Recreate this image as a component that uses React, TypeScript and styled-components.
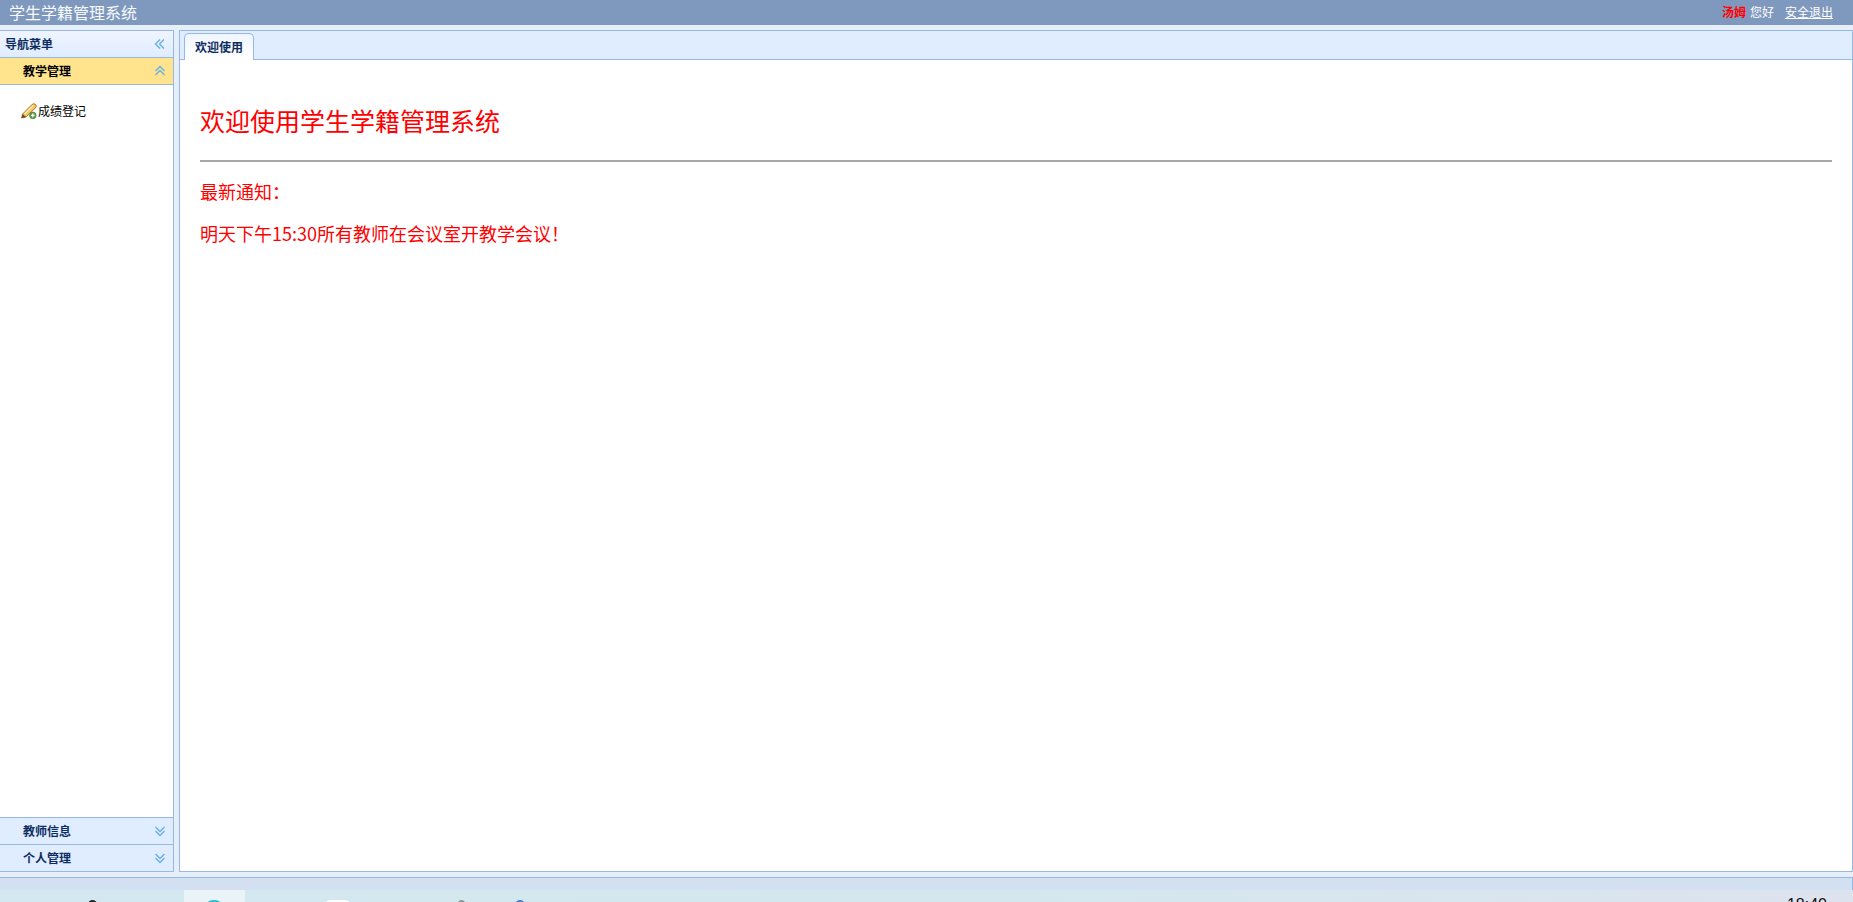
import React from 'react';
import styled, { createGlobalStyle } from 'styled-components';

const FONT = '"Noto Sans CJK SC", "Liberation Sans", sans-serif';

const ChevronIcon: React.FC<{ dir: 'up' | 'down' | 'left' }> = ({ dir }) => {
  const d =
    dir === 'left'
      ? ['M7 1.5 L2.5 6 L7 10.5', 'M11 1.5 L6.5 6 L11 10.5']
      : dir === 'up'
      ? ['M1.5 6 L6 1.5 L10.5 6', 'M1.5 10 L6 5.5 L10.5 10']
      : ['M1.5 2 L6 6.5 L10.5 2', 'M1.5 6 L6 10.5 L10.5 6'];
  return (
    <svg width="12" height="12" viewBox="0 0 12 12" fill="none" stroke="#63aeea" strokeWidth="1.3">
      <path d={d[0]} />
      <path d={d[1]} />
    </svg>
  );
};

const PencilIcon: React.FC = () => (
  <svg width="16" height="16" viewBox="0 0 16 16">
    <path d="M0.6 15 L1.6 11 L11.4 1.2 Q13 0.2 14.6 1.4 Q15.8 3 14.8 4.6 L5 14 Z" fill="#f3c75f" stroke="#a06c26" strokeWidth="0.9" />
    <path d="M0.6 15 L1.6 11 L5 14 Z" fill="#6b4a20" />
    <path d="M3.6 11 L12.4 2.4" stroke="#fff2c0" strokeWidth="1.1" />
    <circle cx="11.8" cy="12.4" r="3.3" fill="#5f9e45" stroke="#3d7a2c" strokeWidth="0.6" />
    <path d="M10 12.4 H13.6 M11.8 10.6 V14.2" stroke="#fff" strokeWidth="1.2" />
  </svg>
);

const App: React.FC = () => {
  return (
    <Page>
      <GlobalStyle />
      <TopBar>
        <SystemName>学生学籍管理系统</SystemName>
        <UserBox>
          <UserName>汤姆</UserName>
          <Greeting>您好</Greeting>
          <Logout>安全退出</Logout>
        </UserBox>
      </TopBar>

      <Workspace>
        <Sidebar>
          <NavTitle>
            <span>导航菜单</span>
            <ChevronIcon dir="left" />
          </NavTitle>
          <GroupHeader $active>
            <span>教学管理</span>
            <ChevronIcon dir="up" />
          </GroupHeader>
          <GroupBody>
            <MenuItem>
              <PencilIcon />
              <span>成绩登记</span>
            </MenuItem>
          </GroupBody>
          <GroupHeader>
            <span>教师信息</span>
            <ChevronIcon dir="down" />
          </GroupHeader>
          <GroupHeader>
            <span>个人管理</span>
            <ChevronIcon dir="down" />
          </GroupHeader>
        </Sidebar>

        <MainPanel>
          <TabStrip>
            <Tab>欢迎使用</Tab>
          </TabStrip>
          <Content>
            <Title>欢迎使用学生学籍管理系统</Title>
            <Rule />
            <Notice>最新通知：</Notice>
            <Notice>明天下午15:30所有教师在会议室开教学会议！</Notice>
          </Content>
        </MainPanel>
      </Workspace>

      <FooterBand />
      <Taskbar>
        <TaskIcon $left={88} $width={9} $color="#222" />
        <TaskTile>
          <TaskIcon $left={21} $width={18} $color="#2cc0d4" />
        </TaskTile>
        <TaskIcon $left={78} $width={29} $color="#fff" />
        <TaskIcon $left={106} $width={7} $color="#8d949a" />
        <TaskIcon $left={50} $width={10} $color="#4a7fd6" />
        <Clock>18:40</Clock>
      </Taskbar>
    </Page>
  );
};

// Styled Components
const GlobalStyle = createGlobalStyle`
  html, body {
    margin: 0;
    padding: 0;
    overflow: hidden;
  }
`;

const Page = styled.div`
  display: flex;
  flex-direction: column;
  height: 902px;
  overflow: hidden;
  background: #e6eef8;
  font-family: ${FONT};
  font-size: 12px;
`;

const TopBar = styled.header`
  display: flex;
  justify-content: space-between;
  align-items: center;
  flex: none;
  height: 25px;
  padding: 0 20px 2px 9px;
  box-sizing: border-box;
  background: #7f99be;
  color: #fff;
`;

const SystemName = styled.div`
  font-size: 16px;
  line-height: 22px;
  color: #f8fafd;
`;

const UserBox = styled.div`
  display: flex;
  align-items: center;
  line-height: 18px;
`;

const UserName = styled.span`
  color: #ff0000;
  font-weight: bold;
`;

const Greeting = styled.span`
  margin-left: 4px;
  color: #fff;
`;

const Logout = styled.a`
  margin-left: 11px;
  color: #fff;
  text-decoration: underline;
`;

const Workspace = styled.div`
  display: flex;
  flex: none;
  gap: 5px;
  height: 842px;
  margin-top: 5px;
`;

const Sidebar = styled.aside`
  display: flex;
  flex-direction: column;
  flex: none;
  width: 174px;
  box-sizing: border-box;
  border: 1px solid #95b8e7;
  border-left: 0;
  background: #fff;
`;

const NavTitle = styled.div`
  display: flex;
  justify-content: space-between;
  align-items: center;
  flex: none;
  height: 26px;
  padding: 0 8px 0 5px;
  border-bottom: 1px solid #95b8e7;
  background: linear-gradient(to bottom, #eff5ff, #e0ecff);
  color: #0e2d5f;
  font-weight: bold;
  line-height: 16px;
`;

const GroupHeader = styled.div<{ $active?: boolean }>`
  display: flex;
  justify-content: space-between;
  align-items: center;
  flex: none;
  height: 26px;
  padding: 0 7px 0 23px;
  border-bottom: 1px solid #95b8e7;
  background: ${p => (p.$active ? '#ffe48d' : '#e0ecff')};
  color: ${p => (p.$active ? '#000' : '#0e2d5f')};
  font-weight: bold;
  line-height: 16px;

  &:last-child {
    border-bottom: 0;
  }
`;

const GroupBody = styled.div`
  flex: 1;
  padding: 18px 0 0 21px;
  border-bottom: 1px solid #95b8e7;
`;

const MenuItem = styled.div`
  display: flex;
  align-items: center;
  gap: 1px;
  height: 16px;
  color: #000;
  line-height: 16px;
`;

const MainPanel = styled.main`
  display: flex;
  flex-direction: column;
  flex: 1;
  box-sizing: border-box;
  border: 1px solid #95b8e7;
  background: #fff;
`;

const TabStrip = styled.div`
  display: flex;
  align-items: flex-end;
  flex: none;
  height: 29px;
  padding-left: 4px;
  box-sizing: border-box;
  border-bottom: 1px solid #95b8e7;
  background: #e0ecff;
`;

const Tab = styled.div`
  width: 70px;
  height: 27px;
  margin-bottom: -1px;
  box-sizing: border-box;
  border: 1px solid #95b8e7;
  border-bottom: 0;
  border-radius: 5px 5px 0 0;
  background: linear-gradient(to bottom, #eff5ff, #fff);
  color: #0e2d5f;
  font-weight: bold;
  line-height: 26px;
  text-align: center;
`;

const Content = styled.div`
  flex: 1;
  padding: 43px 20px 0;
  color: #ff0000;
`;

const Title = styled.h1`
  margin: 0;
  font-size: 25px;
  font-weight: normal;
  line-height: 34px;
`;

const Rule = styled.hr`
  height: 2px;
  margin: 23px 0 17px;
  border: 0;
  background: #a8a8a8;
`;

const Notice = styled.p`
  margin: 0 0 18px;
  font-size: 18px;
  line-height: 24px;
`;

const FooterBand = styled.div`
  flex: none;
  height: 13px;
  margin-top: 5px;
  box-sizing: border-box;
  border-top: 1px solid #95b8e7;
  border-right: 1px solid #95b8e7;
  background: #d2e0f2;
`;

const Taskbar = styled.div`
  display: flex;
  align-items: flex-start;
  flex: 1;
  padding-top: 10px;
  overflow: hidden;
  background: linear-gradient(to right, #d3e8f0 0%, #d4e7ef 55%, #dde3ee 100%);
`;

const TaskIcon = styled.span<{ $left: number; $width: number; $color: string }>`
  flex: none;
  width: ${p => p.$width}px;
  height: 12px;
  margin-left: ${p => p.$left}px;
  border-radius: 8px 8px 0 0;
  background: ${p => p.$color};
`;

const TaskTile = styled.div`
  display: flex;
  flex: none;
  align-items: flex-start;
  width: 61px;
  height: 22px;
  margin: -10px 0 0 87px;
  padding-top: 10px;
  box-sizing: border-box;
  background: #eaf4f8;
`;

const Clock = styled.div`
  margin: -4px 26px 0 auto;
  color: #111;
  font-family: "Liberation Sans", sans-serif;
  font-size: 16px;
  line-height: 18px;
`;

export default App;
